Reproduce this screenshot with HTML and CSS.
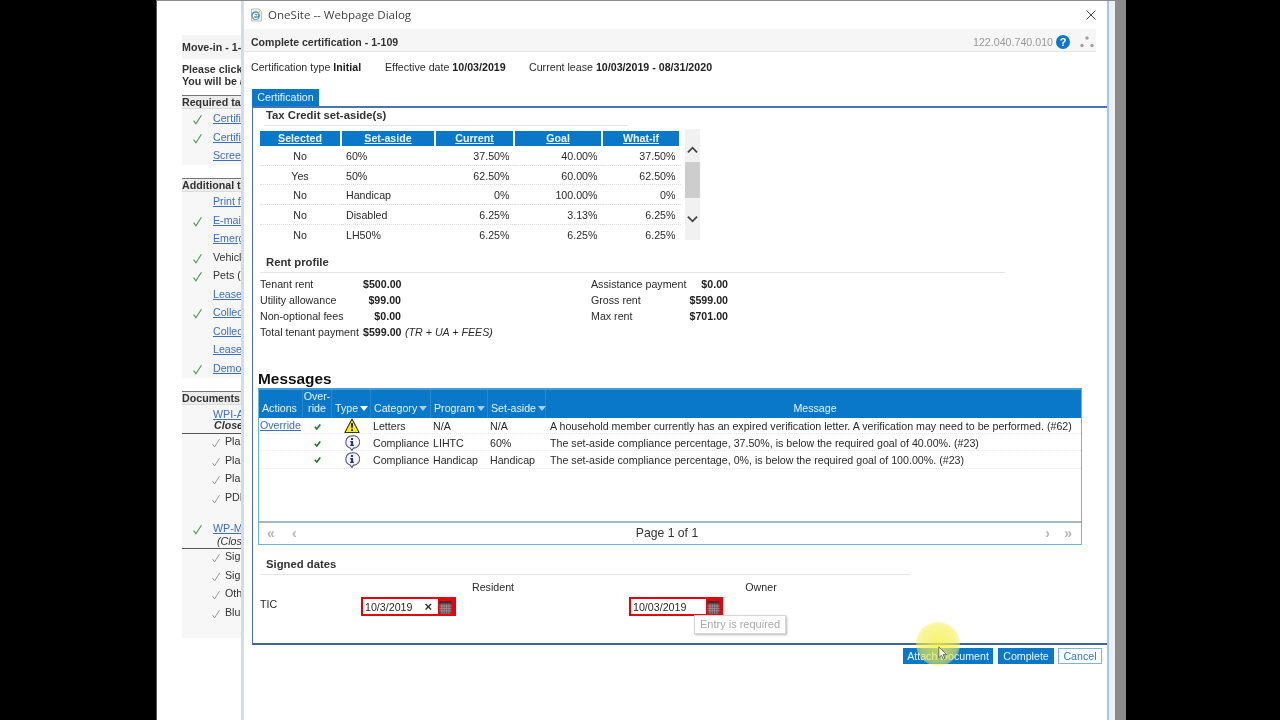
FILE: index.html
```html
<!DOCTYPE html>
<html lang="en">
<head>
<meta charset="utf-8">
<title>OneSite -- Webpage Dialog</title>
<link rel="stylesheet" href="styles.css">
</head>
<body>
<svg class="defs" width="0" height="0" aria-hidden="true">
  <symbol id="check" viewBox="0 0 14 14"><path d="M2 8.5 L5 12.5 L12 1.5" fill="none" stroke="currentColor" stroke-width="1.4"/></symbol>
  <symbol id="tick" viewBox="0 0 8 8"><path d="M1 4.5 L3.2 6.8 L7.2 1.6" fill="none" stroke="#1f7d2a" stroke-width="1.9"/></symbol>
  <symbol id="info" viewBox="0 0 18 18"><path d="M9 1 A7 7 0 1 1 10.5 14.8 L9 17.5 L6.8 14.6 A7 7 0 0 1 9 1 Z" fill="#f4f4fb" stroke="#555a74" stroke-width="1.2"/><rect x="7.8" y="3.4" width="2.4" height="2.2" fill="#23308c"/><path d="M7 6.8 H10.2 V11 H11.2 V12.4 H6.9 V11 H7.9 V8.1 H7 Z" fill="#23308c"/></symbol>
  <symbol id="warn" viewBox="0 0 18 18"><path d="M9 1.2 L17 16.3 H1 Z" fill="#f5ee1c" stroke="#3b3b20" stroke-width="1.3" stroke-linejoin="round"/><path d="M7.8 5.8 H10.2 L9.7 11.6 H8.3 Z M8 12.6 H10 V14.6 H8 Z" fill="#111"/></symbol>
  <symbol id="cal" viewBox="0 0 13 14"><rect x="0.5" y="1" width="12" height="13" fill="#6a4a4e"/><rect x="0.5" y="1" width="12" height="2.6" fill="#3f3034"/><path d="M0.5 6 H12.5 M0.5 8.4 H12.5 M0.5 10.8 H12.5 M3 3.6 V14 M5.2 3.6 V14 M7.6 3.6 V14 M10 3.6 V14" stroke="#a8949a" stroke-width="0.8"/></symbol>
  <symbol id="caret" viewBox="0 0 8 5"><path d="M0 0 H8 L4 5 Z" fill="currentColor"/></symbol>
</svg>

<div class="screen">
  <div class="window">
    <div class="page">
      <div class="page-title">Move-in - 1-109</div>
      <div class="page-note">Please click<br>You will be a</div>

      <div class="sec-head">Required tasks</div>
      <div class="sec-body sec-req">
        <div class="row"><svg class="ok"><use href="#check"/></svg><a class="link">Certification</a></div>
        <div class="row"><svg class="ok"><use href="#check"/></svg><a class="link">Certification</a></div>
        <div class="row"><span></span><a class="link">Screening</a></div>
      </div>

      <div class="sec-head sec-gap">Additional tasks</div>
      <div class="sec-body sec-add">
        <div class="row"><span></span><a class="link">Print forms</a></div>
        <div class="row"><svg class="ok"><use href="#check"/></svg><a class="link">E-mail</a></div>
        <div class="row"><span></span><a class="link">Emergency</a></div>
        <div class="row"><svg class="ok"><use href="#check"/></svg><span>Vehicles</span></div>
        <div class="row"><svg class="ok"><use href="#check"/></svg><span>Pets (</span></div>
        <div class="row"><span></span><a class="link">Lease</a></div>
        <div class="row"><svg class="ok"><use href="#check"/></svg><a class="link">Collect</a></div>
        <div class="row"><span></span><a class="link">Collect</a></div>
        <div class="row"><span></span><a class="link">Lease</a></div>
        <div class="row"><svg class="ok"><use href="#check"/></svg><a class="link">Demog</a></div>
      </div>

      <div class="sec-head sec-gap-doc">Documents</div>
      <div class="sec-body sec-doc">
        <div class="row doc-row"><span></span><a class="link">WPI-A</a></div>
        <div class="doc-note strong">Closed</div>
        <div class="sub"><svg class="done"><use href="#check"/></svg><span>Place</span></div>
        <div class="sub"><svg class="done"><use href="#check"/></svg><span>Place</span></div>
        <div class="sub"><svg class="done"><use href="#check"/></svg><span>Place</span></div>
        <div class="sub"><svg class="done"><use href="#check"/></svg><span>PDF</span></div>
        <div class="row doc-row doc-second"><svg class="ok"><use href="#check"/></svg><a class="link">WP-M</a></div>
        <div class="doc-note doc-note-2">(Closed</div>
        <div class="sub"><svg class="done"><use href="#check"/></svg><span>Signed</span></div>
        <div class="sub"><svg class="done"><use href="#check"/></svg><span>Signed</span></div>
        <div class="sub"><svg class="done"><use href="#check"/></svg><span>Other</span></div>
        <div class="sub"><svg class="done"><use href="#check"/></svg><span>Blue</span></div>
      </div>
    </div>

    <div class="dialog">
      <div class="titlebar">
        <svg class="ie" viewBox="0 0 14 14"><path d="M2.5 1 H10 L12.5 3.5 V13 H2.5 Z" fill="#eef1f4" stroke="#b4b4b0" stroke-width="0.8"/><circle cx="6.6" cy="7.6" r="4.3" fill="#3f9ad6"/><path d="M4.2 7.6 H9 M8.8 9.7 A2.6 2.6 0 1 1 9 6.6" fill="none" stroke="#fff" stroke-width="1.2"/><path d="M2 10 Q7 10 11 3" fill="none" stroke="#d9a93a" stroke-width="0.9"/></svg>
        <span class="title-text">OneSite -- Webpage Dialog</span>
        <svg class="close" viewBox="0 0 10 10"><path d="M0.5 0.5 L9.5 9.5 M9.5 0.5 L0.5 9.5" stroke="#333" stroke-width="0.9"/></svg>
      </div>

      <div class="head-band">
        <strong class="head-title">Complete certification - 1-109</strong>
        <span class="version">122.040.740.010</span>
        <span class="help">?</span>
        <svg class="dots" viewBox="0 0 14 12"><circle cx="7" cy="2" r="1.7" fill="#a0a0a0"/><circle cx="2" cy="9.5" r="1.7" fill="#a0a0a0"/><circle cx="12" cy="9.5" r="1.7" fill="#a0a0a0"/></svg>
      </div>

      <div class="info-row">
        <span class="info-a">Certification type <b>Initial</b></span>
        <span class="info-b">Effective date <b>10/03/2019</b></span>
        <span>Current lease <b>10/03/2019 - 08/31/2020</b></span>
      </div>

      <div class="tab">Certification</div>

      <div class="panel">
        <h3 class="sub-head tax-head">Tax Credit set-aside(s)</h3>
        <div class="tax-wrap">
          <div class="tax-scroll">
            <div class="tax-table">
              <a class="th">Selected</a><a class="th">Set-aside</a><a class="th">Current</a><a class="th">Goal</a><a class="th">What-if</a>
              <div class="td c">No</div><div class="td">60%</div><div class="td r">37.50%</div><div class="td r">40.00%</div><div class="td r">37.50%</div>
              <div class="td c">Yes</div><div class="td">50%</div><div class="td r">62.50%</div><div class="td r">60.00%</div><div class="td r">62.50%</div>
              <div class="td c">No</div><div class="td">Handicap</div><div class="td r">0%</div><div class="td r">100.00%</div><div class="td r">0%</div>
              <div class="td c">No</div><div class="td">Disabled</div><div class="td r">6.25%</div><div class="td r">3.13%</div><div class="td r">6.25%</div>
              <div class="td c">No</div><div class="td">LH50%</div><div class="td r">6.25%</div><div class="td r">6.25%</div><div class="td r">6.25%</div>
            </div>
          </div>
          <div class="scrollbar">
            <svg class="chev chev-up" viewBox="0 0 12 8"><path d="M1 6.5 L6 1.5 L11 6.5" fill="none" stroke="#444" stroke-width="2"/></svg>
            <div class="thumb"></div>
            <svg class="chev chev-down" viewBox="0 0 12 8"><path d="M1 1.5 L6 6.5 L11 1.5" fill="none" stroke="#444" stroke-width="2"/></svg>
          </div>
        </div>

        <h3 class="sub-head rent-head">Rent profile</h3>
        <div class="rent">
          <div class="rent-col rent-left">
            <span>Tenant rent</span><b class="money">$500.00</b><span></span>
            <span>Utility allowance</span><b class="money">$99.00</b><span></span>
            <span>Non-optional fees</span><b class="money">$0.00</b><span></span>
            <span>Total tenant payment</span><b class="money">$599.00</b><i class="formula">(TR + UA + FEES)</i>
          </div>
          <div class="rent-col rent-right">
            <span>Assistance payment</span><b class="money">$0.00</b>
            <span>Gross rent</span><b class="money">$599.00</b>
            <span>Max rent</span><b class="money">$701.00</b>
          </div>
        </div>

        <h2 class="msg-title">Messages</h2>
        <div class="msg-grid">
          <div class="msg-row msg-head">
            <div>Actions</div>
            <div class="ctr">Over-<br>ride</div>
            <div>Type<svg class="caret on"><use href="#caret"/></svg></div>
            <div>Category<svg class="caret"><use href="#caret"/></svg></div>
            <div>Program<svg class="caret"><use href="#caret"/></svg></div>
            <div>Set-aside<svg class="caret"><use href="#caret"/></svg></div>
            <div class="msg-col-title">Message</div>
          </div>
          <div class="msg-row msg-a">
            <a class="link override">Override</a>
            <svg class="tick"><use href="#tick"/></svg>
            <svg class="type-ic"><use href="#warn"/></svg>
            <div>Letters</div><div>N/A</div><div>N/A</div>
            <div>A household member currently has an expired verification letter. A verification may need to be performed. (#62)</div>
          </div>
          <div class="msg-row msg-b">
            <span></span>
            <svg class="tick"><use href="#tick"/></svg>
            <svg class="type-ic"><use href="#info"/></svg>
            <div>Compliance</div><div>LIHTC</div><div>60%</div>
            <div>The set-aside compliance percentage, 37.50%, is below the required goal of 40.00%. (#23)</div>
          </div>
          <div class="msg-row msg-c">
            <span></span>
            <svg class="tick"><use href="#tick"/></svg>
            <svg class="type-ic"><use href="#info"/></svg>
            <div>Compliance</div><div>Handicap</div><div>Handicap</div>
            <div>The set-aside compliance percentage, 0%, is below the required goal of 100.00%. (#23)</div>
          </div>
          <div class="pager">
            <span class="pg">«</span><span class="pg pg-prev">‹</span>
            <span class="pg-text">Page 1 of 1</span>
            <span class="pg pg-next">›</span><span class="pg pg-last">»</span>
          </div>
        </div>

        <h3 class="sub-head sign-head">Signed dates</h3>
        <div class="sign">
          <span></span><div class="sign-label">Resident</div><div class="sign-label">Owner</div>
          <div class="tic">TIC</div>
          <div class="date">
            <div class="date-input"><span>10/3/2019</span><span class="clear">×</span></div>
            <svg class="cal"><use href="#cal"/></svg>
          </div>
          <div class="date">
            <div class="date-input"><span>10/03/2019</span></div>
            <svg class="cal"><use href="#cal"/></svg>
            <div class="tooltip">Entry is required</div>
          </div>
        </div>
      </div>

      <div class="actions">
        <button class="btn btn-attach">Attach Document</button>
        <button class="btn btn-complete">Complete</button>
        <button class="btn btn-cancel">Cancel</button>
      </div>

      <div class="pointer">
        <svg class="arrow" viewBox="0 0 12 18"><path d="M1 1 V14 L4.2 11.2 L6.4 16 L8.4 15 L6.2 10.4 H10.4 Z" fill="#fff" stroke="#222" stroke-width="0.8"/></svg>
      </div>
    </div>
  </div>
</div>
</body>
</html>
```
FILE: styles.css
```css
* { box-sizing: border-box; }
html, body { margin: 0; padding: 0; width: 1280px; height: 720px; overflow: hidden; background: #000; }
body { font-family: "Liberation Sans", Arial, sans-serif; font-size: 10.67px; color: #2b2b2b; }
.defs { position: absolute; }

.screen { width: 1280px; height: 720px; padding-left: 156px; background: #000; filter: blur(0.4px); }
.window { position: relative; width: 970px; height: 720px; background: #fff; border-left: 1px solid #555; border-right: 11px solid #8b8b8b; border-top: 1px solid #8b8b8b; overflow: hidden; }

/* background page */
.page { padding: 34px 0 0 25px; width: 300px; color: #333; }
.page-title { height: 24px; line-height: 24px; background: #f4f4f4; font-weight: bold; font-size: 10.67px; }
.page-note { margin-top: 4px; line-height: 12px; font-weight: bold; height: 24px; }
.sec-head { margin-top: 8px; height: 14px; line-height: 12px; font-weight: bold; background: #ececec; border-top: 1px solid #777; border-bottom: 1px solid #ddd; font-size: 10.67px; }
.sec-gap { margin-top: 13px; }
.sec-gap-doc { margin-top: 13px; }
.sec-body { background: #f7f7f7; }
.sec-req { height: 56px; }
.sec-add { height: 186px; }
.sec-doc { height: 233px; }
.row { display: grid; grid-template-columns: 31px 1fr; height: 18.5px; line-height: 18px; }
.doc-row { height: 15px; }
.doc-second { margin-top: 10.6px; }
.ok { width: 11px; height: 13px; margin: 4px 0 0 10px; color: #47984a; }
.link { color: #3c6ec4; text-decoration: underline; }
.doc-note { padding-left: 32px; height: 14px; line-height: 10px; font-style: italic; border-bottom: 1px solid #555; }
.doc-note-2 { height: 15px; line-height: 14px; padding-left: 35px; }
.strong { font-weight: bold; }
.sub { display: grid; grid-template-columns: 43px 1fr; height: 18.6px; line-height: 14px; }
.done { width: 10px; height: 12px; margin: 3px 0 0 29px; color: #9a9a9a; }

/* dialog */
.dialog { position: absolute; left: 84px; top: -1px; width: 868px; height: 722px; background: #fff; border-left: 3px solid #cfdeee; border-right: 2px solid #aac6e2; box-shadow: 6px 0 0 #eef1f4; }
.titlebar { display: flex; align-items: center; height: 29px; padding-left: 5px; padding-right: 11px; }
.ie { width: 14px; height: 14px; }
.title-text { margin-left: 5px; flex: 1; font-family: "Open Sans", sans-serif; font-size: 11.55px; color: #444; }
.close { width: 10px; height: 10px; }

.head-band { display: flex; align-items: center; height: 23px; width: 852px; padding: 3px 2px 0 7px; background: #f6f6f6; border-bottom: 1px solid #e8e8e8; }
.head-title { flex: 1; font-size: 10.55px; color: #333; }
.version { color: #999; font-size: 10.67px; }
.help { width: 14px; height: 14px; margin-left: 3px; border-radius: 50%; background: #1077c6; color: #fff; font-weight: bold; font-size: 11px; line-height: 14px; text-align: center; }
.dots { width: 14px; height: 12px; margin-left: 10px; }

.info-row { display: flex; height: 37px; padding: 8px 0 0 7px; line-height: 14px; }
.info-a { width: 134px; }
.info-b { width: 144px; }
.info-row b { color: #222; }

.tab { width: 67px; height: 17px; margin-left: 8px; line-height: 17px; text-align: center; background: #0a78c8; color: #e8f2fb; }

.panel { height: 539px; margin-left: 8px; border-top: 2px solid #4a72b4; border-left: 1px solid #4a72b4; border-bottom: 2px solid #3f659f; }
.sub-head { margin: 0; font-size: 11.3px; font-weight: bold; color: #333; border-bottom: 1px solid #e6e6e6; }
.tax-head { height: 18px; margin-left: 11px; padding-left: 2px; width: 364px; line-height: 14px; }
.tax-wrap { display: flex; margin-top: 3px; height: 111px; }
.tax-scroll { width: 432px; height: 111px; margin-left: 7px; overflow: hidden; padding-top: 2px; }
.tax-table { display: grid; grid-template-columns: 82px 94px 79px 88px 78px; width: 421px; }
.th { height: 15px; line-height: 15px; background: #0a78c8; background-clip: padding-box; border-right: 2px solid transparent; color: #eaf4fc; font-weight: bold; text-align: center; text-decoration: underline; }
.td { height: 19.7px; padding: 0 4px; line-height: 20px; border-bottom: 1px dotted #ddd; }
.c { text-align: center; padding-right: 6px; }
.r { text-align: right; padding-right: 5.5px; }
.scrollbar { position: relative; width: 15px; height: 111px; background: #f1f1f1; margin-left: -7px; }
.thumb { position: absolute; left: 0; top: 33px; width: 15px; height: 36px; background: #cdcdcd; }
.chev { position: absolute; left: 2px; width: 11px; height: 8px; }
.chev-up { top: 17px; }
.chev-down { top: 86px; }

.rent-head { width: 745px; height: 21px; margin: 12px 0 0 7px; padding-left: 6px; line-height: 20px; }
.rent { display: flex; margin-left: 7px; margin-top: 3px; height: 64px; }
.rent-col { display: grid; grid-auto-rows: 16px; align-items: center; }
.rent-left { width: 331px; grid-template-columns: 103px 38px 1fr; }
.rent-right { grid-template-columns: 98px 39px; align-content: start; }
.money { text-align: right; color: #222; }
.formula { padding-left: 4px; }

.msg-title { margin: 29px 0 0 5px; height: 19px; font-size: 15.4px; line-height: 19px; color: #111; }
.msg-grid { display: flex; flex-direction: column; margin-left: 5px; width: 824px; height: 157px; border: 1px solid #6db5d6; border-top: 2px solid #4a9bd0; }
.msg-row { display: grid; grid-template-columns: 44px 29px 39px 60px 57px 58px 1fr; align-items: center; }
.msg-head { height: 28px; align-items: end; background: #0a78c8; color: #e8f3fb; line-height: 12px; }
.msg-head > div { height: 28px; padding: 12px 0 0 3px; white-space: nowrap; border-right: 1px solid rgba(255,255,255,0.12); line-height: 12px; }
.msg-head > .ctr { text-align: center; padding: 0; }
.msg-head > .msg-col-title { text-align: center; border-right: 0; }
.caret { width: 8px; height: 5px; margin: 0 0 1px 2px; color: #a9cbe9; }
.caret.on { color: #fff; }
.msg-a { height: 16px; }
.msg-b { height: 17px; padding-top: 1px; }
.msg-c { height: 18px; }
.msg-a, .msg-b, .msg-c { border-bottom: 1px dotted #e8e8e8; }
.msg-a > div, .msg-b > div, .msg-c > div { padding-left: 2px; white-space: nowrap; }
.msg-a > div:last-child, .msg-b > div:last-child, .msg-c > div:last-child { padding-left: 4px; }
.override { padding-left: 1px; margin-top: -2px; }
.tick { width: 7px; height: 7px; margin-left: 11px; }
.type-ic { width: 16px; height: 16px; margin-left: 12px; }
.pager { display: flex; align-items: center; height: 23px; margin-top: auto; padding: 0 9px 2px 8px; border-top: 2px solid #a4b8c6; }
.pg { width: 22px; color: #b5b5b5; font-size: 14px; font-weight: bold; }
.pg-prev { padding-left: 3px; }
.pg-text { flex: 1; padding-right: 11px; text-align: center; font-size: 12.2px; color: #333; }
.pg-next { width: 16px; text-align: right; }
.pg-last { text-align: right; }

.sign-head { width: 650px; height: 21px; margin: 9px 0 0 7px; padding-left: 6px; line-height: 20px; }
.sign { display: grid; grid-template-columns: 97px 264px 264px; column-gap: 4px; margin: 5px 0 0 7px; }
.sign-label { height: 17px; line-height: 14px; text-align: center; }
.tic { line-height: 14px; }
.date { position: relative; display: flex; align-items: center; width: 95px; height: 19px; padding: 2px; background: #e8000c; }
.date + .date { width: 94px; }
.date-input { display: flex; justify-content: space-between; align-items: center; width: 75px; height: 15px; padding: 0 6px 0 2px; background: #fff; line-height: 14px; }
.clear { font-size: 13px; font-weight: bold; line-height: 13px; color: #333; }
.cal { width: 13px; height: 14px; margin-left: 1px; }
.tooltip { position: absolute; left: 65px; top: 18px; width: 92px; height: 19px; background: #fff; border: 1px solid #d5d5d5; box-shadow: 1px 1px 2px #bbb; color: #aaa; font-size: 11px; line-height: 17px; text-align: center; }

.actions { display: flex; justify-content: flex-end; gap: 4px; margin-top: 3px; padding-right: 5px; }
.btn { height: 16px; padding: 0; border: 0; font: inherit; line-height: 16px; background: #0a78c8; color: #eaf4fc; }
.btn-attach { width: 90px; margin-right: 1px; }
.btn-complete { width: 56px; }
.btn-cancel { width: 44px; background: #fff; color: #2b7cc4; border: 1px solid #7db4de; line-height: 14px; }

.pointer { position: absolute; left: 672px; top: 622px; width: 44px; height: 44px; border-radius: 50%; background: radial-gradient(circle, rgba(245,240,70,0.8) 0, rgba(245,240,80,0.6) 60%, rgba(245,240,110,0) 100%); }
.arrow { position: absolute; left: 22px; top: 24px; width: 10px; height: 15px; opacity: 0.85; }
```
